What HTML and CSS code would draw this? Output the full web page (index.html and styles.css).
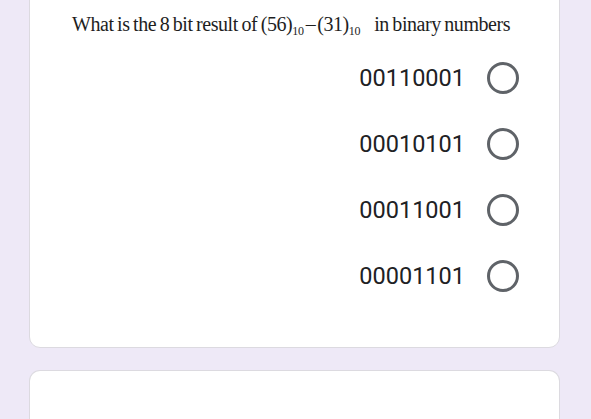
FILE: index.html
```html
<!DOCTYPE html>
<html>
<head>
<meta charset="utf-8">
<link rel="stylesheet" href="styles.css">
</head>
<body>
<div class="page">
  <section class="card card-question">
    <p class="question">What is the 8 bit result of (56)<sub>10</sub><span class="minus">&#8211;</span>(31)<sub>10</sub><span class="gap"></span>in binary numbers</p>
    <div class="options">
      <label class="option"><span class="label">00110001</span><span class="radio"></span></label>
      <label class="option"><span class="label">00010101</span><span class="radio"></span></label>
      <label class="option"><span class="label">00011001</span><span class="radio"></span></label>
      <label class="option"><span class="label">00001101</span><span class="radio"></span></label>
    </div>
  </section>
  <section class="card card-next"></section>
</div>
</body>
</html>
```

FILE: styles.css
```css
html, body {
  margin: 0;
  padding: 0;
  background: #eee9f7;
  overflow: hidden;
}
.page {
  width: 591px;
  height: 419px;
  display: flex;
  flex-direction: column;
  gap: 22px;
  padding-left: 29px;
  box-sizing: border-box;
  overflow: hidden;
}
.card {
  width: 531px;
  background: #ffffff;
  border: 1px solid #dcdae0;
  border-radius: 11px;
  box-sizing: border-box;
  flex: none;
}
.card-question {
  margin-top: -12px;
  height: 360px;
  padding: 23px 40px 0 42px;
}
.card-next {
  height: 49px;
  border-bottom: none;
  border-bottom-left-radius: 0;
  border-bottom-right-radius: 0;
}
.question {
  margin: 0;
  font-family: "Liberation Serif", "Times New Roman", serif;
  font-size: 20px;
  line-height: 24px;
  letter-spacing: -0.45px;
  word-spacing: -1px;
  color: #1e1e1e;
  white-space: nowrap;
}
.question sub {
  font-size: 12px;
  line-height: 0;
  vertical-align: -4px;
  letter-spacing: -0.3px;
}
.minus {
  margin: 0 2px;
}
.gap {
  display: inline-block;
  width: 14px;
}
.options {
  margin-top: 9px;
  display: flex;
  flex-direction: column;
}
.option {
  height: 66px;
  display: flex;
  align-items: center;
  justify-content: flex-end;
  gap: 22px;
}
.option:nth-child(4) {
  height: 65px;
}
.label {
  font-family: Roboto, "Noto Sans", sans-serif;
  font-size: 23.5px;
  color: #202124;
}
.radio {
  width: 32px;
  height: 32px;
  border: 3px solid #5f6368;
  border-radius: 50%;
  box-sizing: border-box;
}
```
